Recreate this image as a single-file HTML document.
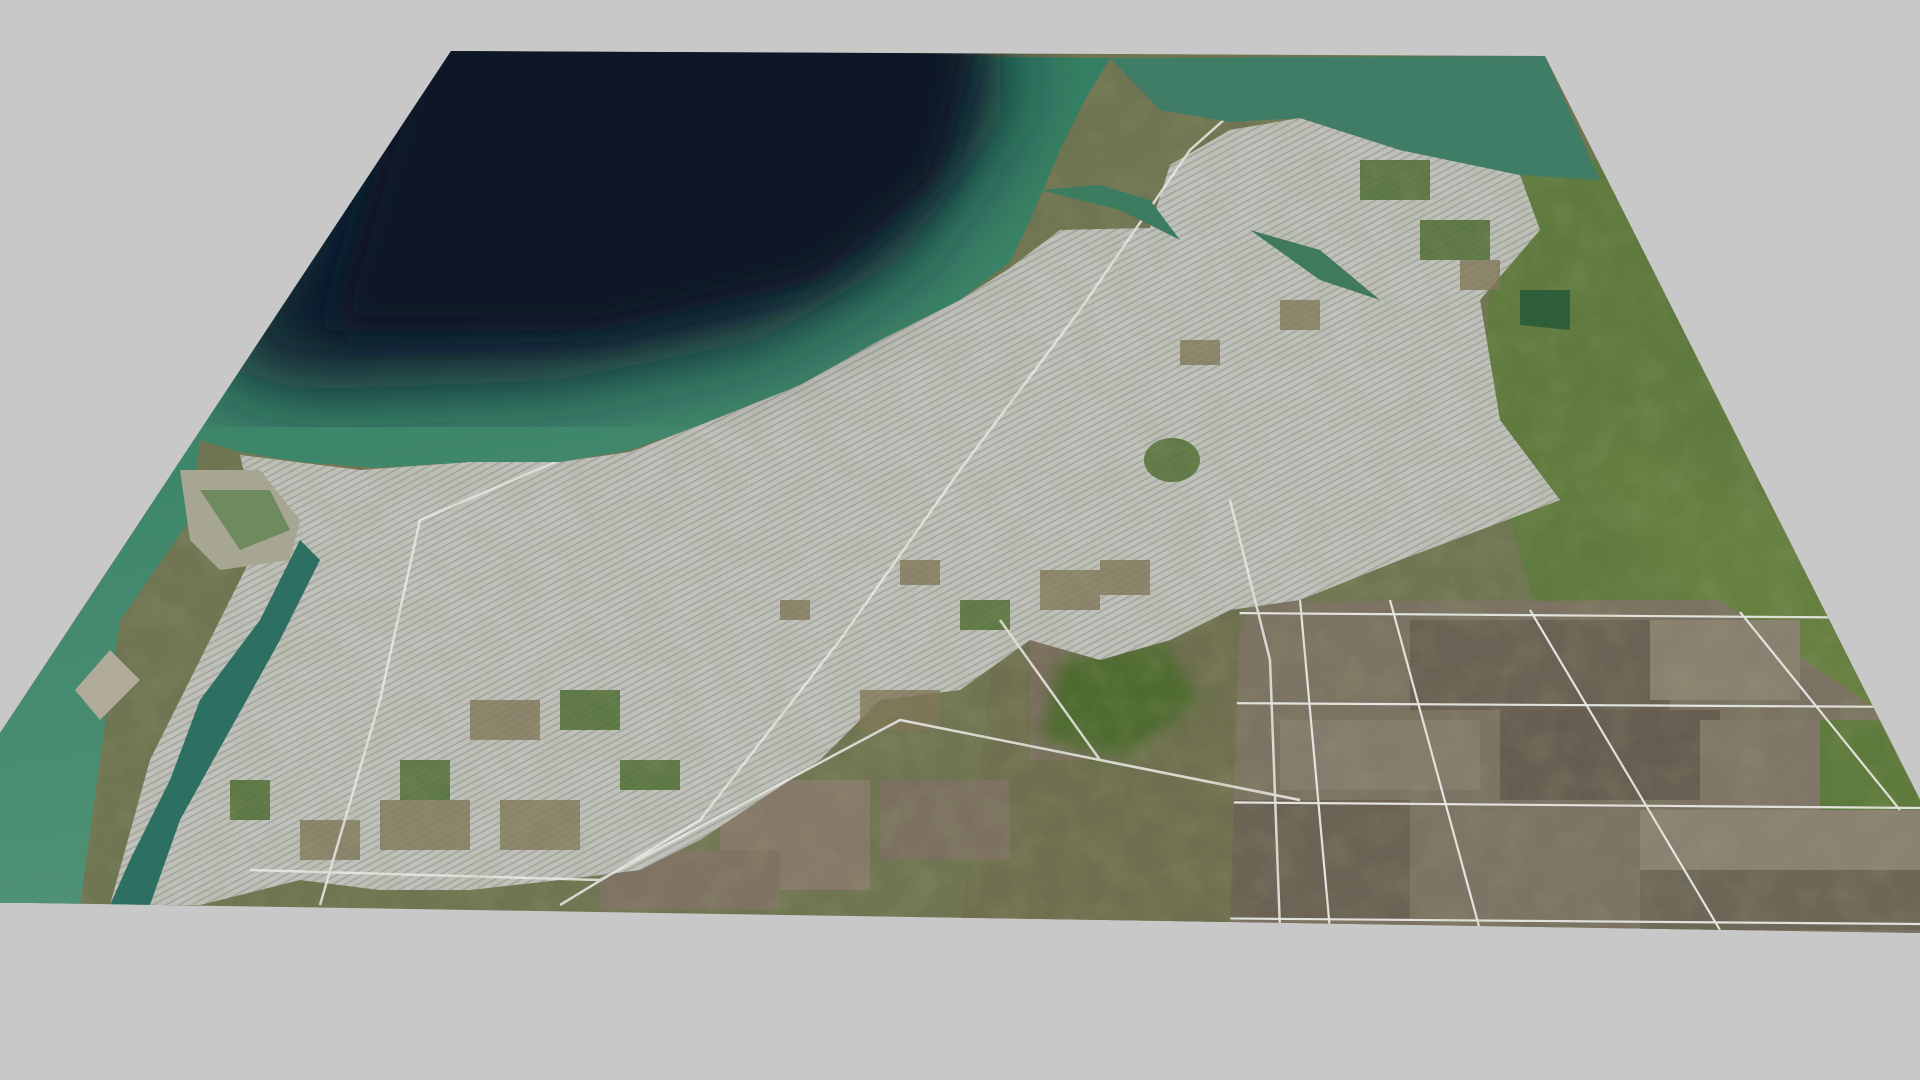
<!DOCTYPE html>
<html><head><meta charset="utf-8"><style>
html,body{margin:0;padding:0;background:#c8c8c8;width:1920px;height:1080px;overflow:hidden}
svg{display:block}
</style></head><body>
<svg width="1920" height="1080" viewBox="0 0 1920 1080" xmlns="http://www.w3.org/2000/svg">
<defs>
<clipPath id="map"><polygon points="451,51 1545,56 1920,800 1920,933 33,903 0,903 0,733"/></clipPath>
<clipPath id="land"><path d="M1110,58 L1085,100 L1060,150 L1030,220 L1010,262 L960,300 L880,340 L800,385 L700,425 L630,450 L560,462 L470,462 L380,468 L300,462 L240,452 L200,440 L190,520 L120,620 L100,760 L80,905 L1920,940 L1920,160 L1600,180 L1520,175 L1400,150 L1300,118 L1230,122 L1160,110 Z"/></clipPath>
<filter id="b8"><feGaussianBlur stdDeviation="8"/></filter>
<filter id="b20"><feGaussianBlur stdDeviation="20"/></filter>
<filter id="b40"><feGaussianBlur stdDeviation="40"/></filter>
<filter id="tex" x="0" y="0" width="100%" height="100%">
<feTurbulence type="fractalNoise" baseFrequency="0.35 0.6" numOctaves="2" seed="3"/>
<feColorMatrix values="0 0 0 0 0.3  0 0 0 0 0.3  0 0 0 0 0.28  0 0 0 1.6 -0.75"/>
</filter>
<filter id="tex2" x="0" y="0" width="100%" height="100%">
<feTurbulence type="fractalNoise" baseFrequency="0.03" numOctaves="3" seed="8"/>
<feColorMatrix values="0 0 0 0 0.35  0 0 0 0 0.4  0 0 0 0 0.2  0 0 0 1.2 -0.45"/>
</filter>
<pattern id="streets" width="6" height="6" patternUnits="userSpaceOnUse" patternTransform="rotate(-28)">
<rect width="6" height="6" fill="#c4c5bf"/><rect width="6" height="1.6" fill="#90918a"/>
</pattern>
<linearGradient id="wat" x1="0" y1="0" x2="0.2" y2="1">
<stop offset="0" stop-color="#2d7a5e"/><stop offset="1" stop-color="#4f9276"/>
</linearGradient>
</defs>
<rect width="1920" height="1080" fill="#c8c8c8"/>
<g clip-path="url(#map)">
<rect x="0" y="0" width="1920" height="1080" fill="#6f7551"/>
<polygon points="1500,160 1920,160 1920,800 1540,620 1480,420" fill="#5f7a3e"/>
<polygon points="1560,420 1920,560 1920,800 1700,640" fill="#66803f" filter="url(#b20)"/>
<polygon points="1250,602 1720,600 1920,740 1920,940 1180,940 1220,700" fill="#7b7262"/>
<rect x="1410" y="620" width="260" height="90" fill="#6a6153"/>
<rect x="1650" y="620" width="150" height="80" fill="#8a8070"/>
<rect x="1280" y="720" width="200" height="70" fill="#857b6c"/>
<rect x="1500" y="710" width="220" height="90" fill="#655c50"/>
<rect x="1700" y="720" width="220" height="90" fill="#807667"/>
<rect x="1230" y="800" width="180" height="120" fill="#6b6254"/>
<rect x="1420" y="810" width="200" height="110" fill="#7d7364"/>
<rect x="1640" y="810" width="280" height="60" fill="#8b8171"/>
<rect x="1640" y="870" width="280" height="60" fill="#6d6657"/>
<rect x="1820" y="720" width="100" height="90" fill="#5d7a3b"/>
<g stroke="#e6e6e2" stroke-width="2.2" fill="none">
<line x1="1230" y1="613" x2="1920" y2="618"/>
<line x1="1200" y1="703" x2="1920" y2="707"/>
<line x1="1180" y1="802" x2="1920" y2="808"/>
<line x1="1170" y1="918" x2="1920" y2="924"/>
<line x1="1300" y1="600" x2="1330" y2="930"/>
<line x1="1390" y1="600" x2="1480" y2="930"/>
<line x1="1530" y1="610" x2="1720" y2="930"/>
<line x1="1740" y1="612" x2="1900" y2="810"/>
</g>
<polygon points="1000,600 1240,600 1230,930 960,930" fill="#6e6f4e"/>
<rect x="1030" y="640" width="90" height="120" fill="#7a6e5e"/>
<rect x="880" y="780" width="130" height="80" fill="#7b705f"/>
<rect x="720" y="780" width="150" height="110" fill="#857868"/>
<rect x="600" y="850" width="180" height="60" fill="#7e7262"/>
<polygon points="1060,660 1160,640 1200,700 1120,760 1040,740" fill="#4e6b2f" filter="url(#b8)"/>
<g clip-path="url(#land)">
<polygon points="240,455 360,470 470,462 560,462 630,452 700,425 800,385 880,340 960,300 1010,268 1060,230 1150,228 1170,165 1230,130 1300,118 1400,150 1520,175 1540,230 1480,300 1500,420 1560,500 1400,560 1300,600 1230,610 1170,640 1100,660 1030,640 960,690 880,700 820,760 760,800 700,840 640,870 560,880 470,890 380,890 300,880 200,905 110,905 150,760 220,620 260,540" fill="url(#streets)"/>
<polygon points="240,455 360,470 470,462 560,462 630,452 700,425 800,385 880,340 960,300 1010,268 1060,230 1150,228 1170,165 1230,130 1300,118 1400,150 1520,175 1540,230 1480,300 1500,420 1560,500 1400,560 1300,600 1230,610 1170,640 1100,660 1030,640 960,690 880,700 820,760 760,800 700,840 640,870 560,880 470,890 380,890 300,880 200,905 110,905 150,760 220,620 260,540" fill="#bdbeb7" opacity="0.45"/>
</g>
<g fill="#7f7658" opacity="0.8">
<rect x="1040" y="570" width="60" height="40"/><rect x="1100" y="560" width="50" height="35"/>
<rect x="900" y="560" width="40" height="25"/><rect x="780" y="600" width="30" height="20"/>
<rect x="860" y="690" width="80" height="40"/><rect x="470" y="700" width="70" height="40"/>
<rect x="380" y="800" width="90" height="50"/><rect x="300" y="820" width="60" height="40"/>
<rect x="500" y="800" width="80" height="50"/><rect x="1280" y="300" width="40" height="30"/>
<rect x="1180" y="340" width="40" height="25"/><rect x="1460" y="260" width="40" height="30"/>
</g>
<g fill="#4f6d33" opacity="0.85">
<rect x="560" y="690" width="60" height="40"/><rect x="960" y="600" width="50" height="30"/>
<rect x="400" y="760" width="50" height="40"/><rect x="230" y="780" width="40" height="40"/>
<ellipse cx="1172" cy="460" rx="28" ry="22"/><rect x="620" y="760" width="60" height="30"/>
<rect x="1360" y="160" width="70" height="40"/><rect x="1420" y="220" width="70" height="40"/>
</g>
<g stroke="#e8e8e4" stroke-width="2.5" fill="none" opacity="0.9">
<path d="M1280,70 L1190,150 L1080,310 L960,470 L840,640 L700,820 L560,905"/>
<path d="M250,870 L600,880 L900,720 L1300,800"/>
<path d="M1000,620 L1100,760 L1300,800"/>
<path d="M1230,500 L1270,660 L1280,930"/>
<path d="M560,460 L420,520 L380,700 L320,905"/>
</g>
<rect width="1920" height="1080" filter="url(#tex2)" opacity="0.3" clip-path="url(#land)"/>
<rect width="1920" height="1080" filter="url(#tex)" opacity="0.15" clip-path="url(#land)"/>
<!-- water -->
<path d="M451,51 L1110,58 L1085,100 L1060,150 L1030,220 L1010,262 L960,300 L880,340 L800,385 L700,425 L630,450 L560,462 L470,462 L380,468 L300,462 L240,452 L200,440 L190,520 L120,620 L100,760 L80,905 L0,905 L0,733 Z" fill="url(#wat)"/>
<g clip-path="url(#map)">
<path d="M380,20 L1000,20 L1000,120 L900,260 L760,340 L560,380 L300,390 L200,360 Z" fill="#0c1a2e" filter="url(#b40)"/>
<path d="M420,20 L980,20 L940,180 L820,280 L600,330 L330,330 Z" fill="#0b1628" filter="url(#b20)"/>
</g>
<path d="M1110,58 L1545,56 L1600,180 L1520,175 L1400,150 L1300,118 L1230,122 L1160,110 Z" fill="#3f7d66"/>
<path d="M1040,190 L1120,210 L1180,240 L1150,200 L1100,185 Z" fill="#3c7c60"/>
<path d="M1250,230 L1320,250 L1380,300 L1320,280 Z" fill="#3f7a5d"/>
<path d="M1520,290 L1570,290 L1570,330 L1520,325 Z" fill="#2f5e3a"/>
<polygon points="180,470 260,470 300,520 290,560 220,570 190,540" fill="#a7a692"/>
<polygon points="200,490 270,490 290,530 240,550" fill="#6f8a5e"/>
<path d="M300,540 L260,620 L200,700 L170,780 L130,860 L110,905 L150,905 L180,820 L230,730 L280,640 L320,560 Z" fill="#2e6f63"/>
<polygon points="75,690 110,650 140,680 100,720" fill="#b0aa98"/>
</g>
</svg>
</body></html>
